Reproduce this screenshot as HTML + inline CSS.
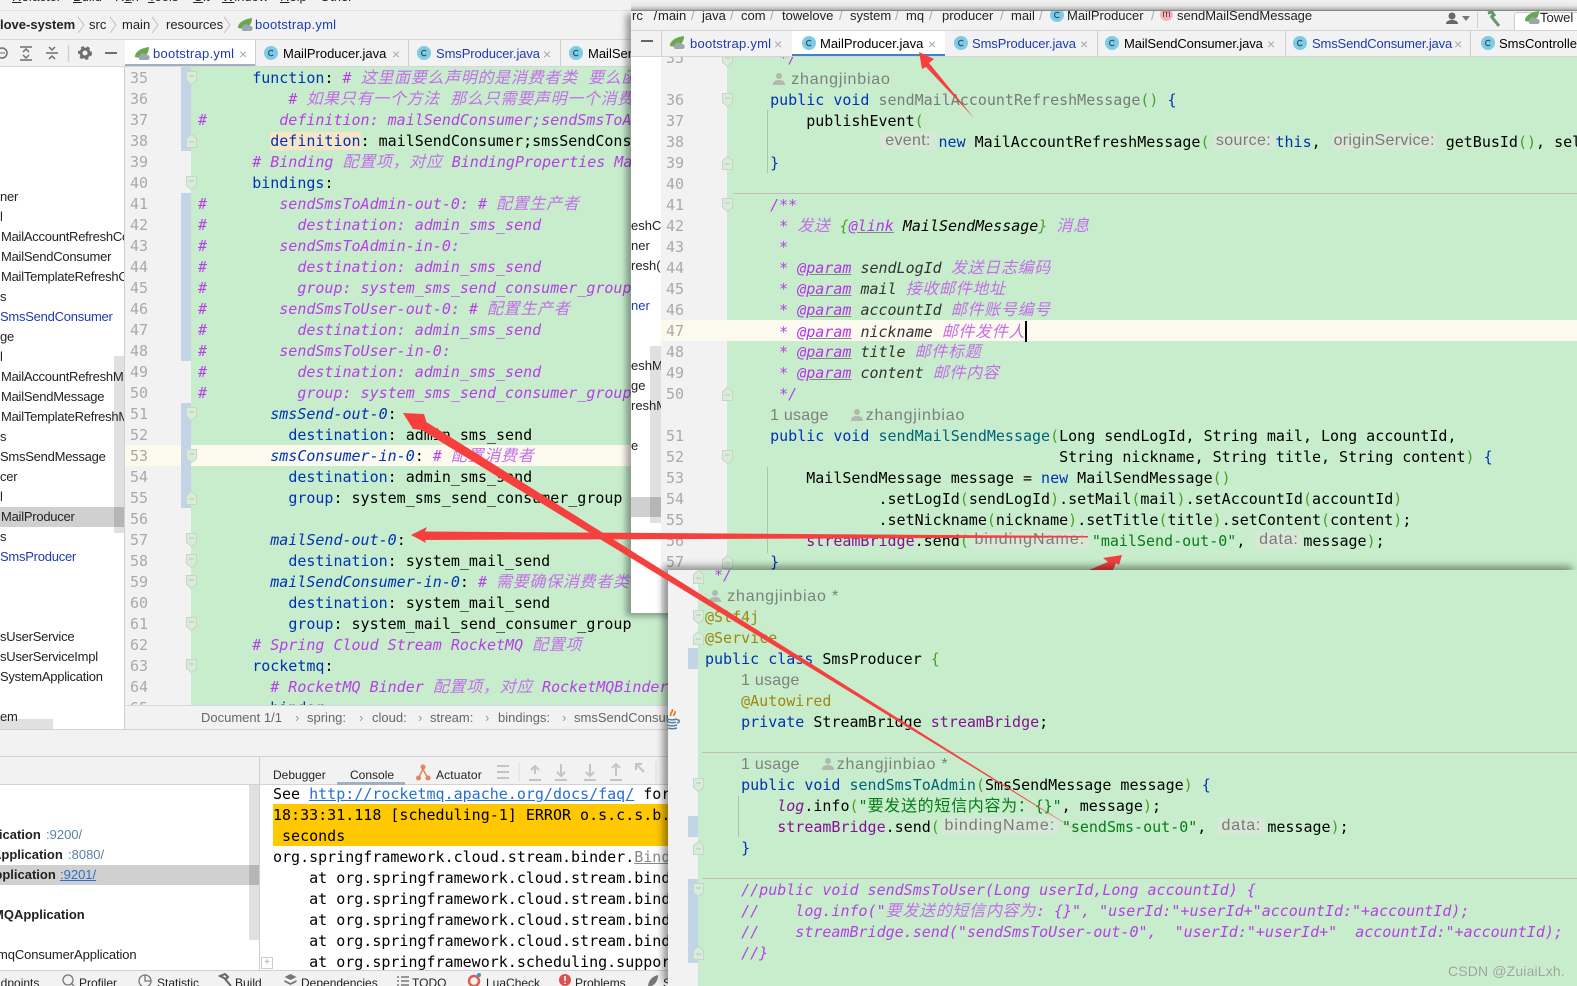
<!DOCTYPE html>
<html><head><meta charset="utf-8"><style>
html,body{margin:0;padding:0;width:1577px;height:986px;overflow:hidden;background:#f2f2f2}
body{position:relative;font-family:"Liberation Sans","Noto Sans CJK SC",sans-serif;font-size:13px;color:#000}
.a{position:absolute;white-space:pre}
.p{position:absolute;overflow:hidden}
.e{position:absolute;font:15px/21px "DejaVu Sans Mono","Noto Sans CJK SC",monospace;color:#000}
.e div{height:21px;white-space:pre}
.n{color:#a9a9a9}
.k{color:#0033b3}.ki{color:#0033b3;font-style:italic}
.m{color:#00627a}.f{color:#871094}.s{color:#067d17}.an{color:#9e880d}.g{color:#4c9f2a}
.c{color:#b83ee8;font-style:italic}
i.z{font-style:inherit;font-size:16px;letter-spacing:.7px;line-height:0;color:#c46eea}
.s i.z{color:#067d17}
.dp{color:#b535e6;text-decoration:underline;text-decoration-color:#789078}
.dn{color:#333;font-style:italic}
.h{display:inline-block;height:18px;line-height:18px;vertical-align:-3px;background:#d8e8d6;border-radius:4px;color:#7a7a7a;font:16px/18px "Liberation Sans",sans-serif;text-align:center;overflow:hidden;font-weight:normal}
.u{font:16px/21px "Liberation Sans",sans-serif;color:#7f7f7f;letter-spacing:.25px}
.un{letter-spacing:.8px}
.tab{position:absolute;font-size:13px;line-height:16px;white-space:pre}
.bl{color:#1d3bb0 !important}
.x{position:absolute;color:#a8a8a8;font-size:14px;line-height:14px}
.sep{position:absolute;width:1px;background:#d0d0d0}
.bar{position:absolute;background:#c3d4e6}
.gr{position:absolute;background:rgba(0,0,0,.12)}
.cr{color:#aaa;position:absolute;line-height:16px;font-size:13px}
.t{position:absolute;line-height:16px;font-size:13px;color:#222;white-space:pre}
.tr .t{letter-spacing:-.25px}
</style></head><body>
<svg width="0" height="0" style="position:absolute"><defs>
<symbol id="fd" viewBox="0 0 11 14"><path d="M.5.5h10v9l-5 4-5-4z" fill="#d8ecd9" stroke="#c4d6c6"/><path d="M3 5h5" stroke="#b5c8b8"/></symbol>
<symbol id="fu" viewBox="0 0 11 14"><path d="M.5 13.5h10v-9l-5-4-5 4z" fill="#d8ecd9" stroke="#c4d6c6"/><path d="M3 8h5" stroke="#b5c8b8"/></symbol>
<symbol id="leaf" viewBox="0 0 16 14"><path d="M1 10C1 4 8 1 15 0c0 6-3 9-7 10-3 .8-5 .5-7 0z" fill="#6aa84f"/><path d="M6 13a3 3 0 0 1 0-5 3.500 3.500 0 0 1 6 0 2.600 2.600 0 0 1 2 5z" fill="#9aa7ad"/></symbol>
<symbol id="cc" viewBox="0 0 14 14"><circle cx="7" cy="7" r="7" fill="#7fcbe6"/><path d="M9.200 5.200A2.700 2.700 0 1 0 9.200 8.800" fill="none" stroke="#2d5a6b" stroke-width="1.200"/></symbol>
<symbol id="pe" viewBox="0 0 14 14"><circle cx="7" cy="4" r="3" fill="#b0b8b0"/><path d="M1 13c0-4 3-5 6-5s6 1 6 5z" fill="#b0b8b0"/></symbol>
</defs></svg>

<!-- top menu -->
<div class="p" style="left:0;top:0;width:631px;height:11px">
<div class="t" style="left:12px;top:-11px"><u>R</u>efactor</div>
<div class="t" style="left:73px;top:-11px"><u>B</u>uild</div>
<div class="t" style="left:115px;top:-11px">R<u>u</u>n</div>
<div class="t" style="left:148px;top:-11px"><u>T</u>ools</div>
<div class="t" style="left:193px;top:-11px"><u>G</u>it</div>
<div class="t" style="left:222px;top:-11px"><u>W</u>indow</div>
<div class="t" style="left:280px;top:-11px"><u>H</u>elp</div>
<div class="t" style="left:320px;top:-11px">Other</div>
</div>
<div class="a" style="left:0;top:10px;width:640px;height:1px;background:#e2e2e2"></div>

<!-- breadcrumb left -->
<div class="t" style="left:0;top:17px;font-weight:bold">love-system</div>
<svg class="a" style="left:76px;top:16px" width="160" height="18" fill="none" stroke="#bdbdbd"><path d="M2 1l6 8-6 8M34 1l6 8-6 8M76 1l6 8-6 8M148 1l6 8-6 8"/></svg>
<div class="t" style="left:89px;top:17px">src</div>
<div class="t" style="left:122px;top:17px">main</div>
<div class="t" style="left:166px;top:17px">resources</div>
<svg class="a" style="left:237px;top:18px" width="16" height="14"><use href="#leaf"/></svg>
<div class="t bl" style="left:255px;top:17px;letter-spacing:.25px">bootstrap.yml</div>
<div class="a" style="left:0;top:39px;width:631px;height:1px;background:#d8d8d8"></div>

<!-- left toolbar -->
<svg class="a" style="left:0;top:43px" width="124" height="22" fill="none" stroke="#6e6e6e" stroke-width="1.500">
<circle cx="2" cy="10" r="5"/><path d="M-1 10h6" stroke-width="1"/>
<path d="M20 4h12M20 17h12M23 9l3-3 3 3M23 12l3 3 3-3"/><path d="M46 10h12M49 4l3 3 3-3M49 16l3-3 3 3"/>
<path d="M68.500 2v17" stroke="#d0d0d0"/><circle cx="85" cy="10" r="4" stroke-width="3"/><circle cx="85" cy="10" r="6" stroke-width="2" stroke-dasharray="3 3"/><path d="M105 10h12" stroke-width="2"/></svg>

<!-- tabs left -->
<div class="a" style="left:125px;top:40px;width:130px;height:24px;background:#fff"></div>
<div class="a" style="left:125px;top:64px;width:130px;height:3px;background:#a3aebf"></div>
<svg class="a" style="left:134px;top:47px" width="16" height="14"><use href="#leaf"/></svg>
<div class="tab bl" style="left:153px;top:46px;letter-spacing:.25px">bootstrap.yml</div><div class="x" style="left:239px;top:47px">×</div>
<div class="sep" style="left:255px;top:40px;height:26px"></div>
<svg class="a" style="left:264px;top:46px" width="14" height="14"><use href="#cc"/></svg>
<div class="tab" style="left:283px;top:46px">MailProducer.java</div><div class="x" style="left:392px;top:47px">×</div>
<div class="sep" style="left:408px;top:40px;height:26px"></div>
<svg class="a" style="left:417px;top:46px" width="14" height="14"><use href="#cc"/></svg>
<div class="tab bl" style="left:436px;top:46px;letter-spacing:-.1px">SmsProducer.java</div><div class="x" style="left:543px;top:47px">×</div>
<div class="sep" style="left:560px;top:40px;height:26px"></div>
<svg class="a" style="left:569px;top:46px" width="14" height="14"><use href="#cc"/></svg>
<div class="tab" style="left:588px;top:46px">MailSendConsumer.java</div>
<div class="a" style="left:0;top:66px;width:631px;height:1px;background:#d6d6d6"></div>

<!-- left tree -->
<div class="p tr" style="left:0;top:67px;width:124px;height:662px;background:#fff;font-size:13px;color:#222">
<div class="a" style="left:0;top:440px;width:124px;height:20px;background:#d0d0d0"></div>
<div class="gr" style="left:114px;top:289px;width:10px;height:177px"></div>
<div class="gr" style="left:0;top:652px;width:53px;height:10px"></div>
<div class="t" style="left:0;top:122px">ner</div>
<div class="t" style="left:0;top:142px">l</div>
<div class="t" style="left:1px;top:162px">MailAccountRefreshConsumer</div>
<div class="t" style="left:1px;top:182px">MailSendConsumer</div>
<div class="t" style="left:1px;top:202px">MailTemplateRefreshConsumer</div>
<div class="t" style="left:0;top:222px">s</div>
<div class="t bl" style="left:0;top:242px">SmsSendConsumer</div>
<div class="t" style="left:0;top:262px">ge</div>
<div class="t" style="left:0;top:282px">l</div>
<div class="t" style="left:1px;top:302px">MailAccountRefreshMessage</div>
<div class="t" style="left:1px;top:322px">MailSendMessage</div>
<div class="t" style="left:1px;top:342px">MailTemplateRefreshMessage</div>
<div class="t" style="left:0;top:362px">s</div>
<div class="t" style="left:0;top:382px">SmsSendMessage</div>
<div class="t" style="left:0;top:402px">cer</div>
<div class="t" style="left:0;top:422px">l</div>
<div class="t" style="left:1px;top:442px">MailProducer</div>
<div class="t" style="left:0;top:462px">s</div>
<div class="t bl" style="left:0;top:482px">SmsProducer</div>
<div class="t" style="left:0;top:562px">sUserService</div>
<div class="t" style="left:0;top:582px">sUserServiceImpl</div>
<div class="t" style="left:0;top:602px">SystemApplication</div>
<div class="t" style="left:0;top:642px">em</div>
</div>
<div class="a" style="left:124px;top:67px;width:1px;height:662px;background:#d0d0d0"></div>

<!-- left editor -->
<div class="p" style="left:125px;top:67px;width:543px;height:638px;background:#f2f2f2">
<div class="a" style="left:66px;top:0;width:477px;height:638px;background:#c7edcc"></div>
<div class="a" style="left:0;top:378px;width:56px;height:21px;background:#fcfaed"></div>
<div class="a" style="left:66px;top:378px;width:477px;height:21px;background:#fcf9ef"></div>
<div class="bar" style="left:56px;top:0;width:10px;height:84px"></div>
<div class="bar" style="left:56px;top:126px;width:10px;height:168px"></div>
<div class="bar" style="left:56px;top:336px;width:10px;height:105px"></div>
<div class="e n" style="left:5px;top:1px">
<div>35</div><div>36</div><div>37</div><div>38</div><div>39</div><div>40</div><div>41</div><div>42</div><div>43</div><div>44</div><div>45</div><div>46</div><div>47</div><div>48</div><div>49</div><div>50</div><div>51</div><div>52</div><div>53</div><div>54</div><div>55</div><div>56</div><div>57</div><div>58</div><div>59</div><div>60</div><div>61</div><div>62</div><div>63</div><div>64</div><div>65</div></div>
<svg class="a" style="left:61px;top:4px" width="11" height="14"><use href="#fd"/></svg>
<svg class="a" style="left:61px;top:67px" width="11" height="14"><use href="#fu"/></svg>
<svg class="a" style="left:61px;top:109px" width="11" height="14"><use href="#fd"/></svg>
<svg class="a" style="left:61px;top:340px" width="11" height="14"><use href="#fd"/></svg>
<svg class="a" style="left:61px;top:382px" width="11" height="14"><use href="#fd"/></svg>
<svg class="a" style="left:61px;top:424px" width="11" height="14"><use href="#fu"/></svg>
<svg class="a" style="left:61px;top:466px" width="11" height="14"><use href="#fd"/></svg>
<svg class="a" style="left:61px;top:487px" width="11" height="14"><use href="#fd"/></svg>
<svg class="a" style="left:61px;top:508px" width="11" height="14"><use href="#fd"/></svg>
<svg class="a" style="left:61px;top:550px" width="11" height="14"><use href="#fd"/></svg>
<svg class="a" style="left:61px;top:592px" width="11" height="14"><use href="#fd"/></svg>
<div class="e" style="left:73px;top:1px;width:470px">
<div>      <span class="k">function</span>: <span class="c"># <i class="z">这里面要么声明的是消费者类 要么函数</i></span></div>
<div>          <span class="c"># <i class="z">如果只有一个方法 那么只需要声明一个消费者</i></span></div>
<div><span class="c">#        definition: mailSendConsumer;sendSmsToAdmin</span></div>
<div>        <span class="k" style="background:#f6e6c6">definition</span>: mailSendConsumer;smsSendConsumer</div>
<div>      <span class="c"># Binding <i class="z">配置项，对应</i> BindingProperties Map</span></div>
<div>      <span class="k">bindings</span>:</div>
<div><span class="c">#        sendSmsToAdmin-out-0: # <i class="z">配置生产者</i></span></div>
<div><span class="c">#          destination: admin_sms_send</span></div>
<div><span class="c">#        sendSmsToAdmin-in-0:</span></div>
<div><span class="c">#          destination: admin_sms_send</span></div>
<div><span class="c">#          group: system_sms_send_consumer_group</span></div>
<div><span class="c">#        sendSmsToUser-out-0: # <i class="z">配置生产者</i></span></div>
<div><span class="c">#          destination: admin_sms_send</span></div>
<div><span class="c">#        sendSmsToUser-in-0:</span></div>
<div><span class="c">#          destination: admin_sms_send</span></div>
<div><span class="c">#          group: system_sms_send_consumer_group</span></div>
<div>        <span class="ki">smsSend-out-0</span>:</div>
<div>          <span class="k">destination</span>: admin_sms_send</div>
<div>        <span class="ki">smsConsumer-in-0</span>: <span class="c"># <i class="z">配置消费者</i></span></div>
<div>          <span class="k">destination</span>: admin_sms_send</div>
<div>          <span class="k">group</span>: system_sms_send_consumer_group</div>
<div></div>
<div>        <span class="ki">mailSend-out-0</span>:</div>
<div>          <span class="k">destination</span>: system_mail_send</div>
<div>        <span class="ki">mailSendConsumer-in-0</span>: <span class="c"># <i class="z">需要确保消费者类</i></span></div>
<div>          <span class="k">destination</span>: system_mail_send</div>
<div>          <span class="k">group</span>: system_mail_send_consumer_group</div>
<div>      <span class="c"># Spring Cloud Stream RocketMQ <i class="z">配置项</i></span></div>
<div>      <span class="k">rocketmq</span>:</div>
<div>        <span class="c"># RocketMQ Binder <i class="z">配置项，对应</i> RocketMQBinderConfiguration</span></div>
<div>        <span class="k">binder</span>:</div>
</div>
</div>
<div class="a" style="left:125px;top:705px;width:543px;height:1px;background:#d8d8d8"></div>

<!-- editor breadcrumb -->
<div class="p" style="left:125px;top:706px;width:543px;height:23px;color:#666;font-size:13px">
<div class="t" style="left:76px;top:4px;color:#666">Document 1/1</div><div class="t" style="left:170px;top:4px;color:#999">›</div>
<div class="t" style="left:182px;top:4px;color:#666">spring:</div><div class="t" style="left:234px;top:4px;color:#999">›</div>
<div class="t" style="left:247px;top:4px;color:#666">cloud:</div><div class="t" style="left:293px;top:4px;color:#999">›</div>
<div class="t" style="left:305px;top:4px;color:#666">stream:</div><div class="t" style="left:360px;top:4px;color:#999">›</div>
<div class="t" style="left:373px;top:4px;color:#666">bindings:</div><div class="t" style="left:437px;top:4px;color:#999">›</div>
<div class="t" style="left:449px;top:4px;color:#666">smsSendConsumer-in-0</div>
</div>
<div class="a" style="left:0;top:729px;width:668px;height:1px;background:#d2d2d2"></div>
<div class="a" style="left:0;top:756px;width:668px;height:1px;background:#d2d2d2"></div>

<!-- run panel -->
<div class="p" style="left:0;top:785px;width:259px;height:185px;background:#fff">
<div class="a" style="left:0;top:80px;width:259px;height:20px;background:#d0d0d0"></div>
<div class="gr" style="left:249px;top:0;width:10px;height:155px"></div>
<div class="t" style="left:-30px;top:42px"><b>Application</b></div>
<div class="t" style="left:46px;top:42px;color:#5b7fa8">:9200/</div>
<div class="t" style="left:-8px;top:62px"><b>Application</b></div>
<div class="t" style="left:68px;top:62px;color:#5b7fa8">:8080/</div>
<div class="t" style="left:-15px;top:82px"><b>Application</b></div>
<div class="t" style="left:60px;top:82px;color:#2a6fc0;text-decoration:underline">:9201/</div>
<div class="t" style="left:-7px;top:122px"><b>MQApplication</b></div>
<div class="t" style="left:-3px;top:162px;letter-spacing:-.1px">mqConsumerApplication</div>
</div>
<div class="a" style="left:259px;top:757px;width:1px;height:213px;background:#d0d0d0"></div>
<div class="a" style="left:0;top:784px;width:668px;height:1px;background:#d2d2d2"></div>
<div class="t" style="left:273px;top:767px;font-size:12px">Debugger</div>
<div class="t" style="left:350px;top:767px;font-size:12px">Console</div>
<div class="a" style="left:337px;top:782px;width:68px;height:3px;background:#a3aebf"></div>
<svg class="a" style="left:416px;top:763px" width="15" height="18" fill="none" stroke="#e8845c" stroke-width="1.500"><path d="M2 16l5-10 5 10"/><circle cx="2.500" cy="15" r="1.800" fill="#e8845c"/><circle cx="7" cy="4" r="1.800" fill="#e8845c"/><circle cx="12" cy="15" r="1.800" fill="#e8845c"/></svg>
<div class="t" style="left:436px;top:767px;font-size:12px;letter-spacing:.15px">Actuator</div>
<svg class="a" style="left:490px;top:760px" width="170" height="24" fill="none" stroke="#c4c4c4" stroke-width="2"><path d="M7 6h12M7 12h12M7 18h12"/><path d="M29 2v20" stroke="#ddd" stroke-width="1"/><path d="M39 20h12M41 10l4-4 4 4M45 6v8"/><path d="M65 20h12M71 4v12M67 12l4 4 4-4"/><path d="M94 20h12M100 4v12M96 12l4 4 4-4"/><path d="M120 20h12M126 16V4M122 8l4-4 4 4"/><path d="M146 4l8 8M146 10V4h6"/><path d="M166 2v20" stroke="#ddd" stroke-width="1"/></svg>

<div class="p" style="left:260px;top:785px;width:408px;height:185px;background:#fff">
<div class="a" style="left:13px;top:19px;width:395px;height:42px;background:#ffc800"></div>
<div class="a" style="left:1px;top:172px;width:10px;height:10px;border:1px solid #ccc;color:#aaa;font:10px/10px 'Liberation Sans';text-align:center">+</div>
<div class="e" style="left:13px;top:-1px;width:420px">
<div>See <span style="color:#2470d6;text-decoration:underline">http://rocketmq.apache.org/docs/faq/</span> for</div>
<div>18:33:31.118 [scheduling-1] ERROR o.s.c.s.b.DefaultBinder</div>
<div> seconds</div>
<div>org.springframework.cloud.stream.binder.<span style="color:#888;text-decoration:underline">BinderExcept</span></div>
<div>    at org.springframework.cloud.stream.binder.Abstract</div>
<div>    at org.springframework.cloud.stream.binder.Abstract</div>
<div>    at org.springframework.cloud.stream.binder.Abstract</div>
<div>    at org.springframework.cloud.stream.binder.Abstract</div>
<div>    at org.springframework.scheduling.support.Delegating</div>
</div>
</div>

<!-- bottom bar -->
<div class="a" style="left:0;top:970px;width:668px;height:1px;background:#d2d2d2"></div>
<div class="p" style="left:0;top:971px;width:668px;height:15px;font-size:12px">
<div class="t" style="left:-14px;top:4px;font-size:12px">Endpoints</div>
<svg class="a" style="left:62px;top:3px" width="14" height="14" fill="none" stroke="#777" stroke-width="1.300"><circle cx="6" cy="6" r="5"/><path d="M9 9l4 4"/></svg>
<div class="t" style="left:79px;top:4px;font-size:12px">Profiler</div>
<svg class="a" style="left:138px;top:3px" width="14" height="14" fill="none" stroke="#777" stroke-width="1.300"><circle cx="7" cy="7" r="6"/><path d="M7 1v6h6"/></svg>
<div class="t" style="left:157px;top:4px;font-size:12px">Statistic</div>
<svg class="a" style="left:218px;top:2px" width="14" height="14" fill="none" stroke="#666" stroke-width="2"><path d="M2 3l5-2 3 3-2 2zM7 6l6 7"/></svg>
<div class="t" style="left:235px;top:4px;font-size:12px">Build</div>
<svg class="a" style="left:284px;top:3px" width="13" height="14" fill="#777"><path d="M6.500 0l6 3-6 3-6-3zM.5 6l6 3 6-3v2l-6 3-6-3z"/></svg>
<div class="t" style="left:301px;top:4px;font-size:12px">Dependencies</div>
<svg class="a" style="left:397px;top:3px" width="12" height="14" stroke="#777" stroke-width="1.500"><path d="M0 3h2M4 3h8M0 7h2M4 7h8M0 11h2M4 11h8"/></svg>
<div class="t" style="left:412px;top:4px;font-size:12px">TODO</div>
<svg class="a" style="left:467px;top:1px" width="15" height="15" fill="none"><circle cx="7" cy="9" r="5" stroke="#e35b4f" stroke-width="2.500"/><circle cx="12" cy="3" r="2" fill="#3b8fd4"/></svg>
<div class="t" style="left:486px;top:4px;font-size:12px">LuaCheck</div>
<svg class="a" style="left:559px;top:3px" width="12" height="14"><circle cx="6" cy="6" r="6" fill="#d9524f"/><path d="M6 2v5M6 8.500v1.500" stroke="#fff" stroke-width="1.500"/></svg>
<div class="t" style="left:575px;top:4px;font-size:12px">Problems</div>
<svg class="a" style="left:647px;top:3px" width="12" height="14"><path d="M1 13C1 6 6 2 11 1c0 7-4 11-10 12z" fill="#777"/></svg>
<div class="t" style="left:663px;top:4px;font-size:12px">S</div>
</div>

<!-- RIGHT WINDOW -->
<div class="a" style="left:631px;top:0;width:946px;height:11px;background:linear-gradient(#f2f2f2 0,#e8e8e8 50%,#bdbdbd 85%,#7b7b7b 100%)"></div>
<div class="p" style="left:631px;top:11px;width:946px;height:602px;background:#f2f2f2;box-shadow:-5px 3px 6px rgba(0,0,0,.35);overflow:hidden">
<!-- breadcrumb -->
<div class="p" style="left:0;top:0;width:946px;height:19px">
<div class="t" style="left:1px;top:-3px">rc   /</div>
<div class="t" style="left:27px;top:-3px">main</div><div class="cr" style="left:60px;top:-3px">/</div>
<div class="t" style="left:71px;top:-3px">java</div><div class="cr" style="left:99px;top:-3px">/</div>
<div class="t" style="left:110px;top:-3px">com</div><div class="cr" style="left:139px;top:-3px">/</div>
<div class="t" style="left:151px;top:-3px">towelove</div><div class="cr" style="left:208px;top:-3px">/</div>
<div class="t" style="left:219px;top:-3px">system</div><div class="cr" style="left:264px;top:-3px">/</div>
<div class="t" style="left:275px;top:-3px">mq</div><div class="cr" style="left:298px;top:-3px">/</div>
<div class="t" style="left:311px;top:-3px">producer</div><div class="cr" style="left:369px;top:-3px">/</div>
<div class="t" style="left:380px;top:-3px">mail</div><div class="cr" style="left:408px;top:-3px">/</div>
<svg class="a" style="left:419px;top:-3px" width="14" height="14"><use href="#cc"/></svg>
<div class="t" style="left:436px;top:-3px">MailProducer</div><div class="cr" style="left:520px;top:-3px">/</div>
<div class="a" style="left:529px;top:-3px;width:13px;height:13px;border-radius:7px;background:#f4b6bd;color:#7a2a35;font-size:10px;line-height:13px;text-align:center">m</div>
<div class="t" style="left:546px;top:-3px">sendMailSendMessage</div>
<svg class="a" style="left:812px;top:0" width="100" height="19"><circle cx="9" cy="5" r="3.500" fill="#666"/><path d="M3 13c0-3 3-4 6-4s6 1 6 4z" fill="#666"/><path d="M19 5h8l-4 5z" fill="#777"/><path d="M34.500 1v16" stroke="#d0d0d0"/><path d="M45 2l4-1 2 3-3 2 M48 5l8 10" stroke="#5f9a68" stroke-width="3" fill="none"/></svg>
<div class="a" style="left:883px;top:1px;width:70px;height:24px;background:#fff;border:1px solid #ccc;border-radius:3px"></div>
<svg class="a" style="left:893px;top:0" width="16" height="14"><use href="#leaf"/></svg>
<div class="t" style="left:909px;top:-1px">Towel</div>
</div>
<div class="a" style="left:0;top:19px;width:946px;height:1px;background:#d4d4d4"></div>
<!-- tabs -->
<svg class="a" style="left:8px;top:26px" width="16" height="8"><path d="M2 4h12" stroke="#666" stroke-width="2"/></svg>
<div class="sep" style="left:30px;top:20px;height:26px"></div>
<svg class="a" style="left:38px;top:25px" width="16" height="14"><use href="#leaf"/></svg>
<div class="tab bl" style="left:59px;top:25px;letter-spacing:.25px">bootstrap.yml</div><div class="x" style="left:143px;top:26px">×</div>
<div class="a" style="left:161px;top:20px;width:153px;height:23px;background:#fff"></div>
<div class="a" style="left:161px;top:43px;width:153px;height:3px;background:#4083c9"></div>
<svg class="a" style="left:171px;top:25px" width="14" height="14"><use href="#cc"/></svg>
<div class="tab" style="left:189px;top:25px">MailProducer.java</div><div class="x" style="left:297px;top:26px">×</div>
<svg class="a" style="left:323px;top:25px" width="14" height="14"><use href="#cc"/></svg>
<div class="tab bl" style="left:341px;top:25px;letter-spacing:-.1px">SmsProducer.java</div><div class="x" style="left:449px;top:26px">×</div>
<div class="sep" style="left:466px;top:20px;height:26px"></div>
<svg class="a" style="left:474px;top:25px" width="14" height="14"><use href="#cc"/></svg>
<div class="tab" style="left:493px;top:25px;letter-spacing:-.1px">MailSendConsumer.java</div><div class="x" style="left:636px;top:26px">×</div>
<div class="sep" style="left:654px;top:20px;height:26px"></div>
<svg class="a" style="left:662px;top:25px" width="14" height="14"><use href="#cc"/></svg>
<div class="tab bl" style="left:681px;top:25px;letter-spacing:-.15px">SmsSendConsumer.java</div><div class="x" style="left:823px;top:26px">×</div>
<div class="sep" style="left:839px;top:20px;height:26px"></div>
<svg class="a" style="left:850px;top:25px" width="14" height="14"><use href="#cc"/></svg>
<div class="tab" style="left:868px;top:25px">SmsController.java</div>
<div class="a" style="left:0;top:45px;width:946px;height:1px;background:#d4d4d4"></div>
<!-- tree strip -->
<div class="p" style="left:0;top:46px;width:30px;height:556px;background:#fff;font-size:13px">
<div class="a" style="left:0;top:440px;width:30px;height:20px;background:#d0d0d0"></div>
<div class="gr" style="left:19px;top:289px;width:11px;height:177px"></div>
<div class="t" style="left:0;top:161px">eshCo</div>
<div class="t" style="left:0;top:181px">ner</div>
<div class="t" style="left:0;top:201px">resh(</div>
<div class="t bl" style="left:0;top:241px">ner</div>
<div class="t" style="left:0;top:301px">eshM</div>
<div class="t" style="left:0;top:321px">ge</div>
<div class="t" style="left:0;top:341px">reshM</div>
<div class="t" style="left:0;top:381px">e</div>
</div>
<!-- editor -->
<div class="p" style="left:30px;top:46px;width:916px;height:556px;background:#f2f2f2">
<div class="a" style="left:66px;top:0;width:850px;height:556px;background:#c7edcc"></div>
<div class="a" style="left:0;top:263px;width:66px;height:21px;background:#fcfaed"></div>
<div class="a" style="left:66px;top:263px;width:850px;height:21px;background:#fcf9ef"></div>
<div class="a" style="left:73px;top:136px;width:843px;height:1px;background:#bdbdbd"></div>
<div class="a" style="left:106px;top:53px;width:1px;height:63px;background:#a9c4ae"></div>
<div class="a" style="left:106px;top:410px;width:1px;height:86px;background:#a9c4ae"></div>
<div class="e n" style="left:5px;top:-9px">
<div>35</div><div></div><div>36</div><div>37</div><div>38</div><div>39</div><div>40</div><div>41</div><div>42</div><div>43</div><div>44</div><div>45</div><div>46</div><div>47</div><div>48</div><div>49</div><div>50</div><div></div><div>51</div><div>52</div><div>53</div><div>54</div><div>55</div><div>56</div><div>57</div></div>
<svg class="a" style="left:61px;top:-4px" width="11" height="14"><use href="#fd"/></svg>
<svg class="a" style="left:61px;top:36px" width="11" height="14"><use href="#fd"/></svg>
<svg class="a" style="left:61px;top:99px" width="11" height="14"><use href="#fu"/></svg>
<svg class="a" style="left:61px;top:141px" width="11" height="14"><use href="#fd"/></svg>
<svg class="a" style="left:61px;top:330px" width="11" height="14"><use href="#fu"/></svg>
<svg class="a" style="left:61px;top:393px" width="11" height="14"><use href="#fd"/></svg>
<svg class="a" style="left:61px;top:498px" width="11" height="14"><use href="#fu"/></svg>
<div class="e" style="left:73px;top:-9px;width:900px">
<div>     <span class="c">*/</span></div>
<div class="u un"><svg style="vertical-align:-2px;margin-left:38px" width="14" height="14"><use href="#pe"/></svg> zhangjinbiao</div>
<div>    <span class="k">public void</span> <span style="color:#7a7a7a">sendMailAccountRefreshMessage</span><span class="g">()</span> <span class="k">{</span></div>
<div>        publishEvent<span class="g">(</span></div>
<div>                <b class="h" style="width:57px;margin-left:1px;letter-spacing:.3px">event:</b> <span class="k" style="margin-left:-7px">new</span> MailAccountRefreshMessage<span class="g">(</span> <b class="h" style="width:62px;margin-left:-6px;letter-spacing:.4px">source:</b><span class="k" style="margin-left:1px">this</span>, <b class="h" style="width:105px;margin-left:2px;letter-spacing:.3px">originService:</b> getBusId<span class="g">()</span>, self</div>
<div>    <span class="k">}</span></div>
<div></div>
<div>    <span class="c">/**</span></div>
<div>     <span class="c">* <i class="z">发送</i> <span class="g">{</span><span class="dp">@link</span> <span class="dn" style="color:#000">MailSendMessage</span><span class="g">}</span> <i class="z">消息</i></span></div>
<div>     <span class="c">*</span></div>
<div>     <span class="c">* <span class="dp">@param</span> <span class="dn">sendLogId</span> <i class="z">发送日志编码</i></span></div>
<div>     <span class="c">* <span class="dp">@param</span> <span class="dn">mail</span> <i class="z">接收邮件地址</i></span></div>
<div>     <span class="c">* <span class="dp">@param</span> <span class="dn">accountId</span> <i class="z">邮件账号编号</i></span></div>
<div>     <span class="c">* <span class="dp">@param</span> <span class="dn">nickname</span> <i class="z">邮件发件人</i></span><span style="display:inline-block;width:2px;height:21px;background:#000;vertical-align:-5px"></span></div>
<div>     <span class="c">* <span class="dp">@param</span> <span class="dn">title</span> <i class="z">邮件标题</i></span></div>
<div>     <span class="c">* <span class="dp">@param</span> <span class="dn">content</span> <i class="z">邮件内容</i></span></div>
<div>     <span class="c">*/</span></div>
<div class="u"><span style="margin-left:36px">1 usage</span><svg style="vertical-align:-2px;margin-left:21px" width="14" height="14"><use href="#pe"/></svg><span class="un" style="margin-left:2px">zhangjinbiao</span></div>
<div>    <span class="k">public void</span> <span class="m">sendMailSendMessage</span><span class="g">(</span>Long sendLogId, String mail, Long accountId,</div>
<div>                                    String nickname, String title, String content<span class="g">)</span> <span class="k">{</span></div>
<div>        MailSendMessage message = <span class="k">new</span> MailSendMessage<span class="g">()</span></div>
<div>                .setLogId<span class="g">(</span>sendLogId<span class="g">)</span>.setMail<span class="g">(</span>mail<span class="g">)</span>.setAccountId<span class="g">(</span>accountId<span class="g">)</span></div>
<div>                .setNickname<span class="g">(</span>nickname<span class="g">)</span>.setTitle<span class="g">(</span>title<span class="g">)</span>.setContent<span class="g">(</span>content<span class="g">)</span>;</div>
<div>        <span class="f">streamBridge</span>.send<span class="g">(</span><b class="h" style="width:118px;margin:0 3px 0 2px;letter-spacing:1px">bindingName:</b><span class="s">"mailSend-out-0"</span>, <b class="h" style="width:45px;margin:0 2px 0 2px;letter-spacing:.8px">data:</b>message<span class="g">)</span>;</div>
<div>    <span class="k">}</span></div>
</div>
</div>
<svg class="a" style="left:0;top:0;pointer-events:none" width="946" height="602"><path d="M491 544l-19 3 5 4-19 8h24l3-7 3 2z" fill="#f43f3f"/></svg>
</div>

<!-- THIRD WINDOW -->
<div class="p" style="left:668px;top:570px;width:909px;height:416px;background:#f2f2f2;box-shadow:-5px -4px 7px rgba(0,0,0,.4);overflow:hidden">
<div class="a" style="left:30px;top:0;width:879px;height:416px;background:#c7edcc"></div>
<div class="bar" style="left:20px;top:78px;width:10px;height:21px"></div>
<div class="bar" style="left:20px;top:246px;width:10px;height:21px"></div>
<div class="bar" style="left:20px;top:309px;width:10px;height:84px"></div>
<div class="a" style="left:34px;top:182px;width:875px;height:1px;background:#bdbdbd"></div>
<div class="a" style="left:34px;top:308px;width:875px;height:1px;background:#bdbdbd"></div>
<div class="a" style="left:70px;top:226px;width:1px;height:41px;background:#a9c4ae"></div>
<svg class="a" style="left:25px;top:0" width="11" height="14"><use href="#fu"/></svg>
<svg class="a" style="left:25px;top:40px" width="11" height="14"><use href="#fd"/></svg>
<svg class="a" style="left:25px;top:61px" width="11" height="14"><use href="#fu"/></svg>
<svg class="a" style="left:25px;top:208px" width="11" height="14"><use href="#fd"/></svg>
<svg class="a" style="left:25px;top:271px" width="11" height="14"><use href="#fu"/></svg>
<svg class="a" style="left:25px;top:313px" width="11" height="14"><use href="#fd"/></svg>
<svg class="a" style="left:25px;top:376px" width="11" height="14"><use href="#fu"/></svg>
<div class="e" style="left:37px;top:-5px;width:880px">
<div> <span class="c">*/</span></div>
<div class="u un"><svg style="vertical-align:-2px;margin-left:3px" width="14" height="14"><use href="#pe"/></svg> zhangjinbiao *</div>
<div><span class="an">@Slf4j</span></div>
<div><span class="an">@Service</span></div>
<div><span class="k">public class</span> SmsProducer <span class="g">{</span></div>
<div class="u"><span style="margin-left:36px">1 usage</span></div>
<div>    <span class="an">@Autowired</span></div>
<div>    <span class="k">private</span> StreamBridge <span class="f">streamBridge</span>;</div>
<div></div>
<div class="u"><span style="margin-left:36px">1 usage</span><svg style="vertical-align:-2px;margin-left:21px" width="14" height="14"><use href="#pe"/></svg><span class="un" style="margin-left:2px">zhangjinbiao *</span></div>
<div>    <span class="k">public void</span> <span class="m">sendSmsToAdmin</span><span class="g">(</span>SmsSendMessage message<span class="g">)</span> <span class="k">{</span></div>
<div>        <span class="f" style="font-style:italic">log</span>.info<span class="g">(</span><span class="s">"<i class="z">要发送的短信内容为：</i>{}"</span>, message<span class="g">)</span>;</div>
<div>        <span class="f">streamBridge</span>.send<span class="g">(</span><b class="h" style="width:118px;margin:0 3px 0 1px;letter-spacing:1px">bindingName:</b><span class="s">"sendSms-out-0"</span>, <b class="h" style="width:48px;margin:0 2px 0 2px;letter-spacing:.8px">data:</b>message<span class="g">)</span>;</div>
<div>    <span class="k">}</span></div>
<div></div>
<div>    <span class="c">//public void sendSmsToUser(Long userId,Long accountId) {</span></div>
<div>    <span class="c">//    log.info("<i class="z">要发送的短信内容为</i>: {}", "userId:"+userId+"accountId:"+accountId);</span></div>
<div>    <span class="c">//    streamBridge.send("sendSmsToUser-out-0",  "userId:"+userId+"  accountId:"+accountId);</span></div>
<div>    <span class="c">//}</span></div>
</div>
</div>

<!-- java cup -->
<svg class="a" style="left:665px;top:709px" width="15" height="21" fill="none" stroke="#5382a1" stroke-width="1.500"><path d="M7 0c2 3-3 4-1 7M10 2c1 3-2 3-1 5" stroke="#e76f00"/><path d="M2 10c3 1 7 1 10 0M3 13c3 1 6 1 8 0M2 16c3 1 7 1 10 0M3 19c3 1 6 1 9 0M12 11c3-1 3 3 0 3"/></svg>

<!-- watermark -->
<div class="a" style="left:1448px;top:963px;font:14px/16px 'Liberation Sans',sans-serif;color:#9aa49a;letter-spacing:.15px;text-shadow:0 0 1px #e8f4e8">CSDN @ZuiaiLxh.</div>

<!-- arrows -->
<svg class="a" style="left:0;top:0;pointer-events:none" width="1577" height="986">
<path d="M403 413L424 414 426.400 422 1087 837 421.600 430 413 429z" fill="#f5403e"/>
<path d="M411 535L427 527 425 531.500 1088 536 1088 537.500 425 540 426 543z" fill="#f5403e"/>
<path d="M919 52L934 59 929 63 974 118 926 67 922 69z" fill="#f5403e"/>
</svg>
</body></html>
